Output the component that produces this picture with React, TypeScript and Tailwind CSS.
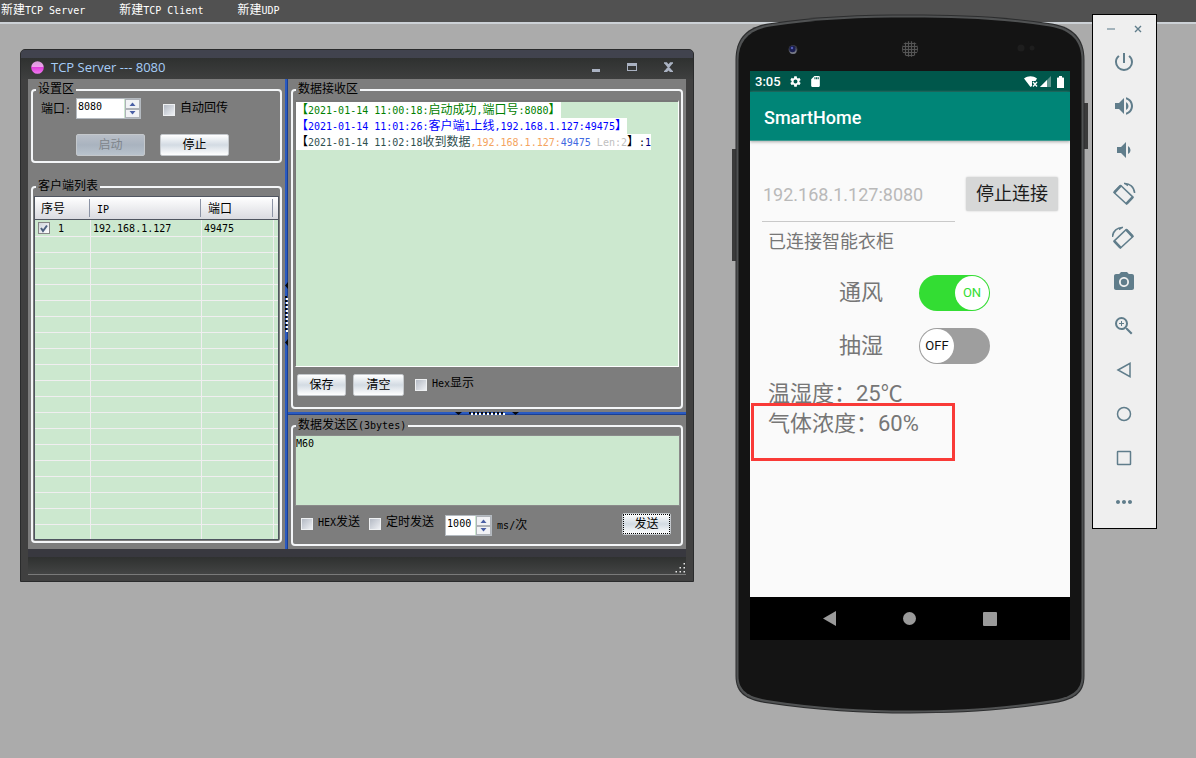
import React, { useState } from 'react';
import {
  MdPowerSettingsNew,
  MdVolumeUp,
  MdVolumeDown,
  MdCameraAlt,
  MdZoomIn,
  MdMoreHoriz,
  MdSettings,
  MdSdCard,
} from 'react-icons/md';

// Half-width runs are set two pixels smaller so that two of them fill one CJK cell
const Mixed = ({ text }: { text: string }) => (
  <>
    {text.split(/([\x20-\x7e]+)/).filter(Boolean).map((part, i) =>
      /^[\x20-\x7e]/.test(part) ? (
        <span key={i} className="font-['DejaVu_Sans_Mono',monospace] text-[10px] whitespace-pre">{part}</span>
      ) : (
        <span key={i}>{part}</span>
      )
    )}
  </>
);

const GroupBox = ({ title, className = '', children }: { title: string; className?: string; children: React.ReactNode }) => (
  <fieldset className={`min-w-0 border-2 border-[#f4f6f8] rounded-[4px] ${className}`}>
    <legend className="ml-[3px] px-0.5 h-[14px] leading-[10px]"><Mixed text={title} /></legend>
    {children}
  </fieldset>
);

const WinButton = ({ label, className = '', disabled = false }: { label: string; className?: string; disabled?: boolean }) => (
  <button
    disabled={disabled}
    className={`h-[22px] pb-0.5 rounded-[2px] border border-[#c4c8cc] text-[12px] leading-none text-center ${
      disabled
        ? 'bg-linear-to-b from-[#b9bfc8] via-[#a9b3bf] to-[#b9c3cd] text-[#7f858b]'
        : 'bg-linear-to-b from-white via-[#d3dbe3] to-white text-black'
    } ${className}`}
  >
    {label}
  </button>
);

const WinCheck = ({ label, className = '', boxClass = '' }: { label: string; className?: string; boxClass?: string }) => (
  <label className={`flex items-start gap-[5px] ${className}`}>
    <input
      type="checkbox"
      className={`appearance-none w-3 h-3 shrink-0 border border-[#eef0f2] bg-linear-to-br from-[#b4bac4] to-[#eef0f4] ${boxClass}`}
    />
    <span className="leading-[10px]"><Mixed text={label} /></span>
  </label>
);

const Spinner = ({ id, value, label, className = '' }: { id: string; value: string; label: string; className?: string }) => {
  const [val, setVal] = useState(value);
  const step = (n: number) => setVal(v => String(Number(v) + n));
  return (
    <div className={`flex h-[21px] bg-white border border-[#b4bac0] ${className}`}>
      <input
        id={id}
        aria-label={label}
        value={val}
        onChange={e => setVal(e.target.value)}
        className="min-w-0 flex-1 h-[15px] pl-px text-[10px] font-['DejaVu_Sans_Mono',monospace] text-black outline-none"
      />
      <div className="flex flex-col w-4 border-l border-[#cce8cf]">
        <button aria-label="增加" onClick={() => step(1)} className="flex-1 flex items-center justify-center border border-[#aeb2b8] bg-[#f1f2f5]">
          <svg width="7" height="4" viewBox="0 0 7 4"><path d="M0.500 4L3.500 0.500L6.500 4z" fill="#4a5fa5" /></svg>
        </button>
        <button aria-label="减少" onClick={() => step(-1)} className="flex-1 flex items-center justify-center border border-[#aeb2b8] bg-[#f1f2f5]">
          <svg width="7" height="4" viewBox="0 0 7 4"><path d="M0.500 0L3.500 3.500L6.500 0z" fill="#4a5fa5" /></svg>
        </button>
      </div>
    </div>
  );
};

const clients = [{ no: '1', ip: '192.168.1.127', port: '49475' }];
const emptyRows = Array.from({ length: 19 }, (_, i) => i);

const ClientTable = () => (
  <div className="mx-px mt-0.5 h-[344px] overflow-hidden border border-[#4f5560] bg-[#cce8cf]">
    <table className="w-full table-fixed border-separate border-spacing-0">
      <colgroup>
        <col className="w-[56px]" />
        <col className="w-[111px]" />
        <col className="w-[72px]" />
        <col />
      </colgroup>
      <thead>
        <tr className="h-[23px] bg-linear-to-b from-white to-[#d8d9df] text-left">
          {['序号', 'IP', '端口'].map(h => (
            <th key={h} className="font-normal p-0 pr-px border-b border-[#4f5560]">
              <div className="h-[18px] pl-[6px] leading-[17px] border-r border-[#8b93a5]"><Mixed text={h} /></div>
            </th>
          ))}
          <th className="p-0 border-b border-[#4f5560]" />
        </tr>
      </thead>
      <tbody>
        {clients.map(c => (
          <tr key={c.no} className="h-4">
            <td className="p-0 border-r border-b border-[#f0eef0]">
              <label className="flex items-center gap-2 pl-[3px] h-[15px]">
                <span className="relative w-3 h-3">
                  <input
                    type="checkbox"
                    aria-label="选择客户端"
                    defaultChecked
                    className="appearance-none block w-3 h-3 border border-[#868686] bg-linear-to-br from-[#cfd4dc] to-white"
                  />
                  <svg className="absolute inset-0 pointer-events-none" width="12" height="12" viewBox="0 0 12 12">
                    <path d="M3 6l2 3l4-5.500" fill="none" stroke="#4c607f" strokeWidth="2" />
                  </svg>
                </span>
                <Mixed text={c.no} />
              </label>
            </td>
            <td className="p-0 pl-0.5 leading-[14px] border-r border-b border-[#f0eef0]"><Mixed text={c.ip} /></td>
            <td className="p-0 pl-0.5 leading-[14px] border-r border-b border-[#f0eef0]"><Mixed text={c.port} /></td>
            <td className="p-0 border-b border-[#f0eef0]" />
          </tr>
        ))}
        {emptyRows.map(i => (
          <tr key={i} className="h-4">
            <td className="p-0 border-r border-b border-[#f0eef0]" />
            <td className="p-0 border-r border-b border-[#f0eef0]" />
            <td className="p-0 border-r border-b border-[#f0eef0]" />
            <td className="p-0 border-b border-[#f0eef0]" />
          </tr>
        ))}
      </tbody>
    </table>
  </div>
);

const LogLine = ({ children, className = '' }: { children: React.ReactNode; className?: string }) => (
  <p className={`w-fit h-4 leading-[14px] bg-white whitespace-nowrap ${className}`}>{children}</p>
);

const ServerWindow = () => (
  <section className="absolute left-[20px] top-[49px] w-[674px] rounded-t-[5px] border border-[#2a2b2c] bg-[#404040] text-[12px] text-black overflow-hidden">
    <header className="h-[29px] border-t-8 border-[#41434e] bg-linear-to-b from-[#2f3130] to-[#3e3f3f] flex items-center pl-[10px] pr-[19px] pb-[3px]">
      <svg width="13" height="13" viewBox="0 0 13 13">
        <defs>
          <linearGradient id="orb" x1="0" y1="0" x2="0" y2="1">
            <stop offset="0" stopColor="#d59ad6" />
            <stop offset="0.45" stopColor="#f0a0ee" />
            <stop offset="0.5" stopColor="#e040dc" />
            <stop offset="1" stopColor="#f07cf0" />
          </linearGradient>
        </defs>
        <circle cx="6.500" cy="6.500" r="6.300" fill="url(#orb)" />
      </svg>
      <h1 className="ml-[7px] flex-1 text-[13px] leading-4 font-['Open_Sans','Noto_Sans',sans-serif] text-[#a6cdf8]">TCP Server --- 8080</h1>
      <div className="flex items-center gap-[26px] text-[#aab2c2]">
        <button aria-label="最小化">
          <svg className="block" width="10" height="10" viewBox="0 0 10 10"><path d="M1 7h8v3H1z" fill="currentColor" /></svg>
        </button>
        <button aria-label="最大化">
          <svg className="block" width="10" height="10" viewBox="0 0 10 10"><path fillRule="evenodd" d="M0 1h10v8H0zM1 4v4h8V4z" fill="currentColor" /></svg>
        </button>
        <button aria-label="关闭">
          <svg className="block" width="11" height="10" viewBox="0 0 11 10"><path d="M1 1h2.500L5.500 3.500L7.500 1H10M1 9.500h2.500L5.500 7L7.500 9.500H10M2 1L9 9.500M9 1L2 9.500" fill="none" stroke="currentColor" strokeWidth="1.600" /></svg>
        </button>
      </div>
    </header>

    <div className="mx-[7px] flex bg-[#7d7d7d]">
      <div className="w-[257px] pl-[3px] pr-[3px] pt-1 pb-1.5">
        <GroupBox title="设置区" className="h-20">
          <div className="flex pl-2 pt-px h-[22px]">
            <label htmlFor="port" className="w-[35px] pt-[3px] leading-[14px]"><Mixed text="端口:" /></label>
            <Spinner id="port" value="8080" label="端口" className="w-[65px]" />
            <WinCheck label="自动回传" className="ml-[22px] pt-1" boxClass="mt-[2px]" />
          </div>
          <div className="flex gap-[15px] pl-[43px] mt-[15px]">
            <WinButton label="启动" disabled className="w-[69px]" />
            <WinButton label="停止" className="w-[69px]" />
          </div>
        </GroupBox>
        <GroupBox title="客户端列表" className="mt-[17px] pb-px">
          <ClientTable />
        </GroupBox>
      </div>

      <div className="w-[3px] bg-[#2a5ac0] border-r border-[#1b3f92] flex items-center">
        <svg className="shrink-0" width="3" height="64" viewBox="0 0 3 64">
          <path d="M3 0v7L0 3.500zM3 57v7L0 60.500z" fill="#05080f" />
          <path d="M1 14v36" stroke="#05080f" strokeWidth="2" strokeDasharray="2 2" />
          <path d="M2 15v36" stroke="#fff" strokeWidth="2" strokeDasharray="2 2" strokeDashoffset="3" />
        </svg>
      </div>

      <div className="flex-1 min-w-0 flex flex-col">
        <GroupBox title="数据接收区" className="mx-[3px] mt-1">
          <div className="mx-[2px] mt-[3px] h-[267px] border border-t-2 border-[#777] border-r-white border-b-white bg-[#cce8cf]">
            <LogLine className="text-[#008000]"><Mixed text="【2021-01-14 11:00:18:启动成功,端口号:8080】" /></LogLine>
            <LogLine className="text-[#0000ff]"><Mixed text="【2021-01-14 11:01:26:客户端1上线,192.168.1.127:49475】" /></LogLine>
            <LogLine>
              <Mixed text="【" />
              <span className="text-[#2f4f4f]"><Mixed text="2021-01-14 11:02:18收到数据" /></span>
              <span className="text-[#f4a460]"><Mixed text=",192.168.1.127:" /></span>
              <span className="text-[#4169e1]"><Mixed text="49475" /></span>
              <span className="text-[#c0c0c0]"><Mixed text=" Len:2" /></span>
              <Mixed text="】:" />
              <span className="text-[#000080]"><Mixed text="1" /></span>
            </LogLine>
          </div>
          <div className="flex pl-1 pt-[7px] pb-[11px]">
            <WinButton label="保存" className="w-[49px]" />
            <WinButton label="清空" className="w-[51px] ml-[7px]" />
            <WinCheck label="Hex显示" className="ml-[11px] pt-[3px]" boxClass="mt-[2px]" />
          </div>
        </GroupBox>

        <div className="mt-[3px] h-[3px] bg-[#2a5ac0] border-b border-[#1b3f92] flex justify-center">
          <svg className="shrink-0" width="64" height="3" viewBox="0 0 64 3">
            <path d="M0 0h7L3.500 3zM57 0h7L60.500 3z" fill="#05080f" />
            <path d="M14 1h36" stroke="#05080f" strokeWidth="2" strokeDasharray="2 2" />
            <path d="M15 2h36" stroke="#fff" strokeWidth="2" strokeDasharray="2 2" strokeDashoffset="3" />
          </svg>
        </div>

        <GroupBox title="数据发送区(3bytes)" className="mx-[3px] mt-1">
          <textarea
            aria-label="发送内容"
            defaultValue="M60"
            className="block w-[385px] mx-[2px] mt-[2px] h-[71px] resize-none outline-none border border-[#8a8a8a] bg-[#cce8cf] pt-px text-[10px] leading-[14px] font-['DejaVu_Sans_Mono',monospace]"
          />
          <div className="flex pl-2 pr-[10px] pt-[7px] h-[38px]">
            <WinCheck label="HEX发送" className="pt-[3px]" boxClass="mt-[2px]" />
            <WinCheck label="定时发送" className="ml-[9px] pt-[3px]" boxClass="mt-[2px]" />
            <Spinner id="interval" value="1000" label="发送间隔" className="w-[47px] ml-[11px] mt-[2px]" />
            <span className="ml-[5px] mt-1 leading-[14px]"><Mixed text="ms/次" /></span>
            <WinButton label="发送" className="w-[49px] ml-auto outline outline-1 outline-dotted outline-black -outline-offset-2" />
          </div>
        </GroupBox>
      </div>
    </div>

    <footer className="mx-[7px] mb-[7px] h-[25px] border-t-8 border-t-[#38383f] bg-linear-to-b from-[#2f3130] to-[#434444] shadow-[0_1px_0_#7a7a7a] flex justify-end items-end">
      <svg width="11" height="11" viewBox="0 0 11 11" fill="#e8e8e8">
        <path d="M8.500 0h1.500v1.500H8.500zM4.500 4h1.500v1.500H4.500zM8.500 4h1.500v1.500H8.500zM.5 8h1.500v1.500H.5zM4.500 8h1.500v1.500H4.500zM8.500 8h1.500v1.500H8.500z" />
      </svg>
    </footer>
  </section>
);

const Toggle = ({ on, label }: { on: boolean; label: string }) => {
  const [active, setActive] = useState(on);
  return (
    <button
      role="switch"
      aria-checked={active}
      aria-label={label}
      onClick={() => setActive(!active)}
      className={`flex w-[71px] h-9 p-px rounded-full ${active ? 'justify-end bg-[#33dd33]' : 'justify-start bg-[#9e9e9e]'}`}
    >
      <span className={`w-[34px] h-[34px] rounded-full bg-white flex items-center justify-center text-[13px] ${active ? 'text-[#33dd33]' : 'text-[#111]'}`}>
        {active ? 'ON' : 'OFF'}
      </span>
    </button>
  );
};

const PhoneBody = () => (
  <svg className="absolute inset-0" width="358" height="701" viewBox="0 0 358 701">
    <defs>
      <pattern id="mesh" width="3" height="3" patternUnits="userSpaceOnUse">
        <rect width="3" height="3" fill="#555" />
        <rect width="2" height="2" fill="#1c1c1c" />
      </pattern>
    </defs>
    <rect x="0" y="135" width="5" height="112" fill="#3a3a3a" />
    <rect x="351" y="89" width="5" height="46" fill="#3a3a3a" />
    <path d="M3.500 46C3.500 24 15 13 36 9.500C85 2 130 .5 178 .5S271 2 320 9.500C341 13 352.500 24 352.500 46V662C352.500 680 341 686 323 689C270 697 225 699.500 178 699.500S86 697 33 689C15 686 3.500 680 3.500 662z" fill="#2c2d2e" />
    <path d="M4.500 46C4.500 25 16 14 37 10.500C85 3 130 1.500 178 1.500S271 3 319 10.500C340 14 351.500 25 351.500 46V662C351.500 679 340 685 322 688C270 696 225 698.500 178 698.500S86 696 34 688C16 685 4.500 679 4.500 662z" fill="#505253" />
    <path d="M6.500 46C6.500 27 17 16 38 12.500C86 5 130 3.500 178 3.500S270 5 318 12.500C339 16 349.500 27 349.500 46V662C349.500 677 339 683 321 686C270 694 225 696.500 178 696.500S86 694 35 686C17 683 6.500 677 6.500 662z" fill="#141414" />
    <circle cx="61" cy="35.500" r="4.500" fill="#3a3c42" />
    <circle cx="61" cy="36.500" r="3.500" fill="#777a86" />
    <circle cx="60.500" cy="35" r="3.200" fill="#1b1e50" />
    <circle cx="60" cy="34" r="1.200" fill="#5560b8" />
    <circle cx="178" cy="35" r="8" fill="url(#mesh)" />
    <circle cx="289" cy="34" r="3.500" fill="#1e1e1e" />
    <circle cx="300" cy="34" r="2.500" fill="#1e1e1e" />
  </svg>
);

const Phone = () => (
  <section className="absolute left-[732px] top-[14px] w-[358px] h-[701px] pt-[57px] pl-[18px] font-[Roboto,'Noto_Sans_CJK_SC',sans-serif]">
    <PhoneBody />
    <div className="relative w-[320px] overflow-hidden">
      <div className="flex items-center h-[21px] pl-[5px] pr-1.5 bg-[#00574b] text-white">
        <span className="text-[13px] font-medium">3:05</span>
        <MdSettings size={13} className="ml-2" />
        <MdSdCard size={13} className="ml-[7px]" />
        <svg className="ml-auto" width="14" height="12" viewBox="0 0 14 12">
          <path d="M0 2.500C4-.5 9-.5 13 2.500L11.500 5H8v5L6.500 11z" fill="#fff" />
          <path d="M9 6l4 4.500M13 6L9 10.500" stroke="#fff" strokeWidth="1.300" />
        </svg>
        <svg className="ml-[2px]" width="11" height="11" viewBox="0 0 11 11">
          <path d="M0 11L11 0V11z" fill="#5e958d" />
          <path d="M0 11L7 4V11z" fill="#fff" />
        </svg>
        <svg className="ml-[6px]" width="7" height="12" viewBox="0 0 7 12"><path d="M2 0h3v1.500h1.500L7 2v10H0V2l.5-.5H2z" fill="#fff" /></svg>
      </div>

      <main className="relative h-[505px] bg-[#fafafa] text-[#767676]">
        <div className="flex items-center h-[49px] pt-[3px] pl-[14px] bg-[#008577] border-b border-[#3d9b91] shadow-[0_1px_3px_#aaa] text-white">
          <h2 className="text-[18px] font-medium">SmartHome</h2>
        </div>
        <div className="mt-[27px] flex items-start pl-3">
          <input
            aria-label="服务器地址"
            defaultValue="192.168.1.127:8080"
            className="w-[193px] h-[54px] px-px border-b border-[#c9c9c9] bg-transparent text-[18px] text-[#b9b9b9] outline-none"
          />
          <button className="ml-[11px] mt-[9px] w-[92px] h-[34px] rounded-[2px] bg-[#d6d7d7] shadow-[0_0_2px_#c4c4c4] text-[18px] leading-none text-[#1c1c1c]">停止连接</button>
        </div>
        <p className="mt-2 pl-[18px] text-[18px] leading-6">已连接智能衣柜</p>
        <div className="mt-[21px] flex items-center pl-[89px] gap-9">
          <span className="text-[22px] leading-9">通风</span>
          <Toggle on label="通风" />
        </div>
        <div className="mt-[17px] flex items-center pl-[89px] gap-9">
          <span className="text-[22px] leading-9">抽湿</span>
          <Toggle on={false} label="抽湿" />
        </div>
        <p className="mt-[15px] pl-[18px] text-[22px] leading-[30px]">温湿度：25℃</p>
        <p className="pl-[18px] text-[22px] leading-[30px]">气体浓度：60%</p>
        <div className="absolute left-px top-[311px] w-[204px] h-[58px] border-3 border-[#f93a37]" />
      </main>

      <nav className="flex items-center justify-center gap-[66px] h-[43px] bg-black text-[#9a9a9a]">
        <button aria-label="返回"><svg className="block" width="14" height="15" viewBox="0 0 14 15"><path d="M0 7.500L13 0V15z" fill="currentColor" /></svg></button>
        <button aria-label="主页"><svg className="block" width="14" height="14" viewBox="0 0 14 14"><circle cx="6.500" cy="6.500" r="6.500" fill="currentColor" /></svg></button>
        <button aria-label="最近任务"><svg className="block" width="14" height="14" viewBox="0 0 14 14"><rect width="14" height="14" rx="1" fill="currentColor" /></svg></button>
      </nav>
    </div>
  </section>
);

const RotateIcon = ({ flip = false }: { flip?: boolean }) => (
  <svg width="24" height="24" viewBox="0 0 24 24" fill="none" stroke="currentColor">
    <g transform={flip ? 'translate(23 0) scale(-1 1)' : undefined}>
      <path d="M8.800 3.500L21 15.200L14.500 22L2 10.500z" strokeWidth="1.600" strokeLinejoin="round" />
      <path d="M8.300 4.200L2.800 10M20.200 15.700L15 21.200" strokeWidth="2.600" strokeLinecap="round" />
      <path d="M12 1.500C17.500 1 22.300 5 22.600 11M12.500 1.200L16 3.500" strokeWidth="1.500" />
    </g>
  </svg>
);

const tools = [
  { name: 'Power', icon: <MdPowerSettingsNew size={24} /> },
  { name: 'Volume up', icon: <MdVolumeUp size={24} /> },
  { name: 'Volume down', icon: <MdVolumeDown size={24} /> },
  { name: 'Rotate left', icon: <RotateIcon /> },
  { name: 'Rotate right', icon: <RotateIcon flip /> },
  { name: 'Screenshot', icon: <MdCameraAlt size={24} /> },
  { name: 'Zoom', icon: <MdZoomIn size={24} /> },
  { name: 'Back', icon: <svg width="24" height="24" viewBox="0 0 24 24" fill="none" stroke="currentColor" strokeWidth="1.500"><path d="M6 12L18 5.300V18.700z" /></svg> },
  { name: 'Home', icon: <svg width="24" height="24" viewBox="0 0 24 24" fill="none" stroke="currentColor" strokeWidth="1.500"><circle cx="12" cy="12" r="6.500" /></svg> },
  { name: 'Overview', icon: <svg width="24" height="24" viewBox="0 0 24 24" fill="none" stroke="currentColor" strokeWidth="1.500"><rect x="5.500" y="5.500" width="13" height="13" rx="0.500" /></svg> },
  { name: 'More', icon: <MdMoreHoriz size={24} /> },
];

const EmulatorToolbar = () => (
  <aside className="absolute left-[1092px] top-[14px] w-[65px] border border-black bg-[#efefef] text-[#607d8b] pb-[14px] pr-px">
    <div className="flex justify-center gap-[17px] pt-[9px]">
      <button aria-label="Minimize"><svg className="block" width="10" height="10" viewBox="0 0 10 10"><path d="M1 5h8" stroke="#a3b3bb" strokeWidth="2" /></svg></button>
      <button aria-label="Close"><svg className="block" width="10" height="10" viewBox="0 0 10 10"><path d="M2 2l6 6M8 2l-6 6" stroke="currentColor" strokeWidth="1.400" /></svg></button>
    </div>
    <div className="mt-4 flex flex-col items-center gap-5">
      {tools.map(t => (
        <button key={t.name} aria-label={t.name} className="w-6 h-6">{t.icon}</button>
      ))}
    </div>
  </aside>
);

const App = () => (
  <div className="relative min-h-screen overflow-hidden bg-[#ababab] font-['Noto_Sans_CJK_SC',sans-serif]">
    <nav className="flex gap-[34px] h-6 pl-px pt-[3px] bg-[#515151] border-b-2 border-[#ccd1d6] text-[12px] text-white">
      {['新建TCP Server', '新建TCP Client', '新建UDP'].map(m => (
        <button key={m} className="h-3 leading-[12px] whitespace-nowrap"><Mixed text={m} /></button>
      ))}
    </nav>
    <ServerWindow />
    <Phone />
    <EmulatorToolbar />
  </div>
);

export default App;
